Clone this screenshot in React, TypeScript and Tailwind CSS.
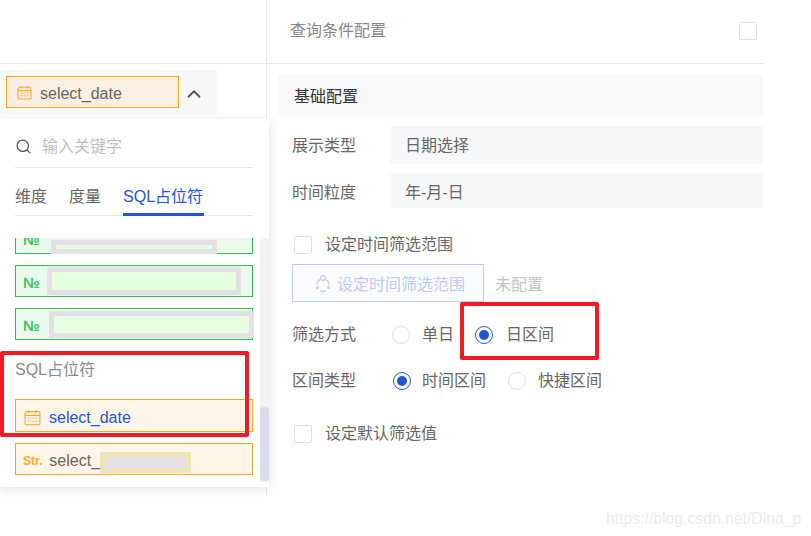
import { ReactNode } from "react";
import { ChevronUp, Search } from "lucide-react";

const CalendarIcon = ({ className }: { className: string }) => (
    <svg viewBox="0 0 16 16" fill="none" stroke="currentColor" className={className}>
        <rect x="1" y="2.5" width="14" height="12.5" rx="1.5" strokeWidth="1.1" />
        <path d="M1 6h14M4.5 1v3M11.5 1v3" strokeWidth="1.1" />
        <path d="M3.5 8.5h2M7 8.5h2M10.5 8.5h2M3.5 11.5h2M7 11.5h2M10.5 11.5h2" strokeWidth="1.1" />
    </svg>
);

const RangeIcon = () => (
    <svg viewBox="0 0 18 18" fill="none" stroke="#b9cdf8" strokeWidth="1.2" className="w-[18px] h-[18px] mb-[3px]">
        <path d="M6 4.5A6 6 0 0 0 3 9.5M12 4.5a6 6 0 0 1 3 5M6 15.5a6 6 0 0 0 6 0" />
        <circle cx="9" cy="3" r="2.4" />
        <circle cx="3.5" cy="12.5" r="1" />
        <circle cx="14.5" cy="12.5" r="1" />
    </svg>
);

const Checkbox = () => (
    <span className="block w-[18px] h-[18px] border border-[#e0e0e0] rounded-[2px] bg-white" />
);

const Radio = ({ checked = false }: { checked?: boolean }) =>
    checked ? (
        <span className="flex items-center justify-center w-[18px] h-[18px] rounded-full border border-[#2256d8]">
            <span className="w-[10px] h-[10px] rounded-full bg-[#2256d8]" />
        </span>
    ) : (
        <span className="block w-[18px] h-[18px] rounded-full border border-[#e0e0e0]" />
    );

const NumberItem = ({ children }: { children: ReactNode }) => (
    <div className="relative flex items-center h-[32px] border border-[#2fbf4f] bg-[#ebf8ec] pl-[7px] pt-[2px]">
        <span className="text-[15px] leading-none font-bold text-[#3ec65d]">№</span>
        {children}
    </div>
);

const Redacted = ({ className }: { className: string }) => (
    <span className={`absolute block border-[5px] border-[#e4e1e6] bg-[#e6ffe0] ${className}`} />
);

const Field = ({
    label,
    value,
    className,
    labelClassName,
}: {
    label: string;
    value: string;
    className: string;
    labelClassName: string;
}) => (
    <div className="flex items-center pl-[25px]">
        <span className={`w-[98px] text-[#666] ${labelClassName}`}>{label}</span>
        <div className={`flex-1 flex items-center bg-[#f7f8fa] pl-[15px] text-[#666] ${className}`}>{value}</div>
    </div>
);

const App = () => {
    return (
        <div
            className="relative flex w-[811px] h-[536px] overflow-hidden bg-white text-[16px] text-[#666]"
            style={{ fontFamily: '"Liberation Sans", "Noto Sans CJK SC", sans-serif' }}
        >
            {/* Left column */}
            <div className="w-[267px] h-[495px] border-r border-[#e6e6e6] shrink-0">
                <div className="h-[64px] w-[265px] border-b border-[#e6e6e6]" />
                <div className="flex items-center mt-[6px] w-[217px] h-[44px] bg-[#f7f8fa] pl-[6px]">
                    <div className="flex items-center w-[173px] h-[32px] border border-[#f5a623] bg-[#f9efe3] pl-[10px] pt-[3px]">
                        <CalendarIcon className="w-[15px] h-[15px] mb-[3px] text-[#fbab2e]" />
                        <span className="ml-[8px] text-[#6b645d]">select_date</span>
                    </div>
                    <ChevronUp className="ml-[4px] mt-[3px] w-[22px] h-[22px] text-[#555]" strokeWidth={2} />
                </div>
            </div>

            {/* Field picker popup */}
            <div className="absolute left-0 top-[119px] w-[269px] h-[368px] bg-white shadow-[0_2px_10px_rgba(0,0,0,0.12)]">
                <div className="pl-[15px] pr-[16px]">
                    <div className="flex items-center h-[49px] pt-[7px] border-b border-[#e6e6e6]">
                        <Search className="w-[17px] h-[17px] text-[#555]" strokeWidth={1.8} />
                        <span className="ml-[10px] text-[#c0c0c0]">输入关键字</span>
                    </div>
                    <div className="flex h-[48px] border-b border-[#e6e6e6] gap-[22px]">
                        <span className="leading-[58px] text-[#666]">维度</span>
                        <span className="leading-[58px] text-[#666]">度量</span>
                        <span className="w-[81px] h-[48px] -mb-px leading-[58px] text-[#2256d8] border-b-[3px] border-[#2256d8]">
                            SQL占位符
                        </span>
                    </div>
                </div>
                <div className="relative mt-[22px] h-[244px] overflow-hidden pl-[15px] pr-[16px]">
                    <div className="-mt-[16px] flex flex-col gap-[11px]">
                        <NumberItem>
                            <Redacted className="left-[35px] top-[17px] w-[166px] h-[14px]" />
                        </NumberItem>
                        <NumberItem>
                            <Redacted className="left-[31px] top-[1px] w-[194px] h-[28px]" />
                        </NumberItem>
                        <NumberItem>
                            <Redacted className="left-[33px] top-[2px] w-[205px] h-[27px]" />
                        </NumberItem>
                    </div>
                    <div className="mt-[19px] leading-[22px] text-[#8a8a94]">SQL占位符</div>
                    <div className="mt-[18px] flex items-center h-[33px] border border-[#f5a623] bg-[#fff5e8] pl-[8px] pt-[4px]">
                        <CalendarIcon className="w-[17px] h-[17px] text-[#fbab2e]" />
                        <span className="ml-[8px] text-[#2256d8]">select_date</span>
                    </div>
                    <div className="relative mt-[11px] flex items-center h-[32px] border border-[#f5a623] bg-[#fff5e8] pl-[7px] pt-[4px]">
                        <span className="text-[12px] font-bold text-[#fbab2e]">Str.</span>
                        <span className="ml-[7px] text-[#6b645d]">select_</span>
                        <span className="absolute left-[84px] top-[8px] w-[91px] h-[21px] border-[5px] border-[#efe4b8] bg-[#e4e1e6]" />
                    </div>
                    {/* Scrollbar */}
                    <div className="absolute right-0 top-0 w-[9px] h-[244px] rounded-t-[4px] bg-[#f2f2f2]">
                        <div className="absolute left-0 top-[169px] w-[9px] h-[74px] rounded-[4px] bg-[#d9dde8]" />
                    </div>
                </div>
            </div>

            {/* Right column */}
            <div className="w-[496px] shrink-0">
                <div className="flex items-center justify-between h-[64px] border-b border-[#e6e6e6] pb-[2px] pl-[23px] pr-[6px]">
                    <span className="text-[#888]">查询条件配置</span>
                    <Checkbox />
                </div>
                <div className="mt-[11px] ml-[11px] flex items-center h-[40px] bg-[#f9f9fa] pl-[16px] pt-[3px] text-[#333]">
                    基础配置
                </div>
                <div className="mt-[11px] flex flex-col gap-[9px]">
                    <Field label="展示类型" value="日期选择" className="h-[38px] pt-[2px]" labelClassName="pt-[2px]" />
                    <Field label="时间粒度" value="年-月-日" className="h-[35px] pt-[4px]" labelClassName="pt-[4px]" />
                </div>
                <div className="mt-[25px] ml-[27px] flex items-center">
                    <Checkbox />
                    <span className="ml-[13px]">设定时间筛选范围</span>
                </div>
                <div className="mt-[7px] ml-[25px] flex items-center">
                    <div className="flex items-center w-[192px] h-[38px] border border-[#bcd0f7] bg-[#fbfcfe] pl-[21px] pt-[4px]">
                        <RangeIcon />
                        <span className="ml-[5px] text-[#b9cdf8]">设定时间筛选范围</span>
                    </div>
                    <span className="ml-[11px] pt-[4px] text-[#c4c4c4]">未配置</span>
                </div>
                <div className="mt-[21px] ml-[25px] flex items-center h-[24px]">
                    <span className="w-[100px]">筛选方式</span>
                    <Radio />
                    <span className="ml-[12px] w-[53px]">单日</span>
                    <Radio checked />
                    <span className="ml-[13px]">日区间</span>
                </div>
                <div className="mt-[22px] ml-[25px] flex items-center h-[24px]">
                    <span className="w-[101px]">区间类型</span>
                    <Radio checked />
                    <span className="ml-[11px] w-[86px]">时间区间</span>
                    <Radio />
                    <span className="ml-[12px]">快捷区间</span>
                </div>
                <div className="mt-[29px] ml-[27px] flex items-center">
                    <Checkbox />
                    <span className="ml-[13px]">设定默认筛选值</span>
                </div>
            </div>

            {/* Red annotation boxes */}
            <div className="absolute left-0 top-[351px] w-[249px] h-[86px] border-[4px] border-[#ee1c25] rounded-[2px]" />
            <div className="absolute left-[460px] top-[302px] w-[139px] h-[58px] border-[4px] border-[#ee1c25] rounded-[2px]" />

            {/* Watermark */}
            <span className="absolute left-[606px] top-[510px] text-[15.75px] leading-[18px] text-[#ececec]">
                https://blog.csdn.net/Dina_p
            </span>
        </div>
    );
};

export default App;
